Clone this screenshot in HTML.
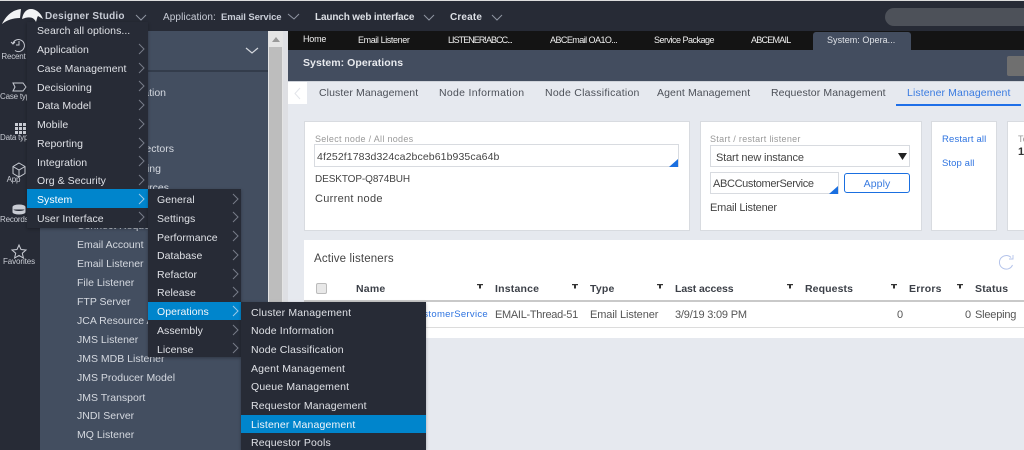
<!DOCTYPE html>
<html><head><meta charset="utf-8"><style>
html,body{margin:0;padding:0;background:#e6e9ef}
#p{position:relative;width:1024px;height:450px;overflow:hidden;background:#e6e9ef;font:11px/16px "Liberation Sans",sans-serif;letter-spacing:.3px;color:#333}
#p div{position:absolute;white-space:nowrap}
.b{font-weight:700}
.h{color:#c8ccd6;height:16px}
.tb{color:#f0f0f0;font-size:9px;letter-spacing:0;top:32px;height:16px}
.tab{color:#4c5058;top:85px;font-size:10.500px;letter-spacing:.1px}
.m{color:#dfe1e6;font-size:10.500px;letter-spacing:.05px;height:16px;margin-top:1px}
.s{font-size:10.500px;letter-spacing:.15px}
.pi{color:#d5d9e0;left:77px;font-size:10.500px;letter-spacing:0;margin-top:1px}
.n{color:#c9ccd4;font-size:8px;letter-spacing:-.2px;width:27px;overflow:hidden;text-align:center;left:0}
.c{background:#fff;border:1px solid #d8dbe0;box-sizing:border-box}
.i{background:#fff;border:1px solid #d8dbe0;box-sizing:border-box}
.th{color:#3c4048;font-weight:700;top:281px;font-size:10.500px;letter-spacing:.2px}
.td{color:#555;top:306px;letter-spacing:.1px}
.tri{width:0;height:0;border-left:9px solid transparent;border-bottom:8px solid #1a6fe0}
svg{position:absolute;overflow:visible}
</style></head><body><div id="p">
<div style="left:0;top:0;width:1024px;height:1px;background:#ddd"></div>
<div style="left:0;top:1px;width:1024px;height:30px;background:#272b36"></div>
<div style="left:885px;top:8px;width:150px;height:18px;border-radius:9px;background:#4d5159"></div>
<svg style="left:0;top:0" width="50" height="30"><path d="M2 24C6 16 12 10 21 9L20 18C13 18 7 20 2 24Z" fill="#f2f3f5"/><path d="M22 19C23 13 26 9 31 9 36 9 41 13 43 19L38 16C37 17 37 19 36 22 34 17 29 16 22 19Z" fill="#f2f3f5"/></svg>
<div class="h b" style="left:45px;top:9px;font-size:10px;letter-spacing:.2px">Designer Studio</div>
<div class="h" style="left:163px;top:10px;font-size:10px;letter-spacing:.1px">Application:</div>
<div class="h b" style="left:221px;top:10px;font-size:9.500px;letter-spacing:-.1px">Email Service</div>
<div class="h b" style="left:315px;top:10px;font-size:10px;letter-spacing:-.15px;color:#dcdfe5">Launch web interface</div>
<div class="h b" style="left:450px;top:10px;font-size:10px;letter-spacing:.15px;color:#dcdfe5">Create</div>
<svg style="left:0;top:0" width="500" height="30" fill="none" stroke="#8f95a2" stroke-width="1"><path d="M136 15l5 5 5-5M288 14l6 5 5-5M424 15l5 5 5-5M492 15l5 5 5-5"/></svg>

<div style="left:0;top:31px;width:40px;height:419px;background:#272b36"></div>
<div style="left:40px;top:31px;width:228px;height:419px;background:#434e60"></div>
<div style="left:40px;top:70px;width:228px;height:2px;background:#333c4b"></div>
<svg style="left:245px;top:47px" width="14" height="8" fill="none" stroke="#d5d8de" stroke-width="1.2"><path d="M1 1l6 5 6-5"/></svg>
<div style="left:268px;top:31px;width:15px;height:419px;background:#e4e4e4"></div>
<div style="left:269px;top:47px;width:13px;height:403px;background:#bdbdbd"></div>
<div style="left:283px;top:31px;width:5px;height:419px;background:#dedfe3"></div>
<svg style="left:272px;top:37px" width="8" height="5"><path d="M0 5L4 0L8 5Z" fill="#999"/></svg>

<div style="left:288px;top:31px;width:736px;height:19px;background:#141414"></div>
<div style="left:813px;top:32px;width:98px;height:18px;background:#434d5f;border-radius:3px 3px 0 0"></div>
<div class="tb" style="left:303px;top:31px;letter-spacing:-.2px">Home</div>
<div class="tb" style="left:358px;letter-spacing:-.4px">Email Listener</div>
<div class="tb" style="left:448px;letter-spacing:-.95px">LISTENER!ABCC...</div>
<div class="tb" style="left:550px;letter-spacing:-.55px">ABCEmail OA1O...</div>
<div class="tb" style="left:654px;letter-spacing:-.5px">Service Package</div>
<div class="tb" style="left:751px;letter-spacing:-.75px">ABCEMAIL</div>
<div class="tb" style="left:827px;color:#e0e3e8;letter-spacing:.05px">System: Opera...</div>
<div style="left:288px;top:50px;width:736px;height:31px;background:#434d5f"></div>
<div class="b" style="left:303px;top:55px;color:#e8eaee;font-size:10.500px;letter-spacing:.05px">System: Operations</div>
<div style="left:1007px;top:56px;width:20px;height:20px;background:#6f6f6f;border-radius:2px"></div>

<div style="left:288px;top:81px;width:736px;height:1px;background:#cfd3da"></div>
<div style="left:288px;top:82px;width:19px;height:22px;background:#fff"></div>
<svg style="left:294px;top:87px" width="8" height="13" fill="none" stroke="#e3e5ea"><path d="M6 1L1 6.500L6 12"/></svg>
<div class="tab" style="left:319px">Cluster Management</div>
<div class="tab" style="left:439px;letter-spacing:.3px">Node Information</div>
<div class="tab" style="left:545px;letter-spacing:.25px">Node Classification</div>
<div class="tab" style="left:657px;letter-spacing:.1px">Agent Management</div>
<div class="tab" style="left:771px">Requestor Management</div>
<div class="tab" style="left:907px;color:#3a7be0">Listener Management</div>
<div style="left:896px;top:104px;width:125px;height:2px;background:#1f6fe8"></div>

<div class="c" style="left:304px;top:121px;width:386px;height:110px"></div>
<div style="left:315px;top:131px;color:#999;font-size:9px;letter-spacing:.3px">Select node / All nodes</div>
<div class="i" style="left:314px;top:144px;width:365px;height:23px"></div>
<div style="left:317px;top:149px;color:#444;font-size:10.500px;letter-spacing:.1px">4f252f1783d324ca2bceb61b935ca64b</div>
<div class="tri" style="left:669px;top:159px"></div>
<div style="left:315px;top:172px;color:#444;font-size:10px;letter-spacing:-.1px">DESKTOP-Q874BUH</div>
<div style="left:315px;top:191px;color:#444">Current node</div>

<div class="c" style="left:700px;top:121px;width:222px;height:110px"></div>
<div style="left:710px;top:131px;color:#999;font-size:9px;letter-spacing:.3px">Start / restart listener</div>
<div class="i" style="left:710px;top:145px;width:200px;height:22px"></div>
<div style="left:716px;top:150px;color:#444;letter-spacing:-.15px">Start new instance</div>
<svg style="left:898px;top:153px" width="9" height="7"><path d="M0 0H9L4.500 7Z" fill="#222"/></svg>
<div class="i" style="left:710px;top:172px;width:129px;height:22px"></div>
<div style="left:713px;top:176px;color:#444;letter-spacing:-.35px">ABCCustomerService</div>
<div class="tri" style="left:829px;top:186px"></div>
<div style="left:844px;top:173px;width:66px;height:20px;box-sizing:border-box;border:1px solid #1a6fe0;border-radius:3px;background:#fff;color:#3a7be0;text-align:center;line-height:20px;font-size:10.500px;letter-spacing:.1px">Apply</div>
<div style="left:710px;top:200px;color:#444;letter-spacing:-.2px">Email Listener</div>

<div class="c" style="left:931px;top:121px;width:66px;height:110px"></div>
<div style="left:942px;top:132px;color:#2f74e0;font-size:9.500px;letter-spacing:.15px">Restart all</div>
<div style="left:942px;top:156px;color:#2f74e0;font-size:9.500px;letter-spacing:.1px">Stop all</div>
<div class="c" style="left:1007px;top:121px;width:40px;height:110px"></div>
<div style="left:1018px;top:131px;color:#999;font-size:9px">Total</div>
<div class="b" style="left:1018px;top:144px;color:#333">1</div>

<div style="left:304px;top:240px;width:720px;height:98px;background:#fff"></div>
<div style="left:314px;top:251px;color:#444;font-size:11.500px;letter-spacing:.15px">Active listeners</div>
<svg style="left:998px;top:254px" width="17" height="17" fill="none" stroke="#b4c3ea" stroke-width="1"><path d="M14.500 11A6.800 6.800 0 1 1 13 3.500"/><path d="M15 1v4h-4" stroke-width=".9"/></svg>
<div style="left:316px;top:283px;width:9px;height:9px;border:1px solid #bbb;border-radius:2px;background:#e8e8e8"></div>
<div class="th" style="left:356px">Name</div>
<div class="th" style="left:495px">Instance</div>
<div class="th" style="left:590px">Type</div>
<div class="th" style="left:675px;letter-spacing:-.1px">Last access</div>
<div class="th" style="left:805px;letter-spacing:.1px">Requests</div>
<div class="th" style="left:909px">Errors</div>
<div class="th" style="left:975px">Status</div>
<svg style="left:0;top:284px" width="1024" height="7" fill="#333"><path d="M477 0h6v1.200h-2v3.300h-2v-3.300h-2zM572 0h6v1.200h-2v3.300h-2v-3.300h-2zM657 0h6v1.200h-2v3.300h-2v-3.300h-2zM787 0h6v1.200h-2v3.300h-2v-3.300h-2zM891 0h6v1.200h-2v3.300h-2v-3.300h-2zM957 0h6v1.200h-2v3.300h-2v-3.300h-2z"/></svg>
<div style="left:304px;top:300px;width:720px;height:2px;background:#c9c9c9"></div>
<div style="left:304px;top:327px;width:720px;height:1px;background:#dcdcdc"></div>
<div class="td" style="left:370px;top:307px;width:118px;text-align:right;color:#2f74e0;font-size:9.500px;letter-spacing:.3px">ABCCustomerService</div>
<div class="td" style="left:495px;top:307px;letter-spacing:-.3px">EMAIL-Thread-51</div>
<div class="td" style="left:590px;top:307px;letter-spacing:-.1px">Email Listener</div>
<div class="td" style="left:675px;top:307px;letter-spacing:-.2px">3/9/19 3:09 PM</div>
<div class="td" style="left:897px;top:307px">0</div>
<div class="td" style="left:965px;top:307px">0</div>
<div class="td" style="left:975px;top:307px;letter-spacing:-.2px">Sleeping</div>

<div class="pi" style="left:100px;top:84px;width:66px;text-align:right;overflow:hidden">Application</div>
<div class="pi" style="left:100px;top:140px;width:74px;text-align:right;overflow:hidden">Connectors</div>
<div class="pi" style="left:100px;top:160px;width:61px;text-align:right;overflow:hidden">Processing</div>
<div class="pi" style="top:179px;left:100px;width:69px;text-align:right;overflow:hidden">Resources</div>
<div class="pi" style="top:217px">Connect Request</div>
<div class="pi" style="top:236px">Email Account</div>
<div class="pi" style="top:255px">Email Listener</div>
<div class="pi" style="top:274px">File Listener</div>
<div class="pi" style="top:293px">FTP Server</div>
<div class="pi" style="top:312px">JCA Resource Adapter</div>
<div class="pi" style="top:331px">JMS Listener</div>
<div class="pi" style="top:350px">JMS MDB Listener</div>
<div class="pi" style="top:369px">JMS Producer Model</div>
<div class="pi" style="top:389px">JMS Transport</div>
<div class="pi" style="top:407px">JNDI Server</div>
<div class="pi" style="top:426px">MQ Listener</div>

<div class="n" style="top:49px">Recent</div>
<div class="n" style="top:89px">Case types</div>
<div class="n" style="top:130px">Data types</div>
<div class="n" style="top:172px">App</div>
<div class="n" style="top:212px">Records</div>
<div style="left:0;top:254px;width:38px;text-align:center;color:#c9ccd4;font-size:8px;letter-spacing:-.1px">Favorites</div>
<svg style="left:0;top:30px" width="40" height="240" fill="none" stroke="#c9ccd4" stroke-width="1"><path d="M13 13A6 6 0 1 1 15 20.500M11 12l2 2 2-2M19 11v4l-3 0"/><path d="M13 53h10l3 4-3 4H13l2-4z"/><path fill="#c9ccd4" stroke="none" d="M15 93h3v3h-3zM19 93h3v3h-3zM23 93h3v3h-3zM15 97h3v3h-3zM19 97h3v3h-3zM23 97h3v3h-3zM15 101h3v3h-3zM19 101h3v3h-3zM23 101h3v3h-3z"/><path d="M19 133l6 3.500v7l-6 3.500-6-3.500v-7zM13 136.500l6 3.500 6-3.500M19 140v7"/><path d="M13 177a6 2 0 0 1 12 0v5a6 2 0 0 1-12 0zM13 179.500a6 2 0 0 0 12 0" fill="#c9ccd4"/><path d="M19 216l2 4.500 5 .5-3.700 3.200 1.100 4.800-4.400-2.600-4.400 2.600 1.100-4.800L12 221l5-.5z" transform="translate(0 -1)"/></svg>

<div style="left:27px;top:22px;width:121px;height:206px;background:#272b36;box-shadow:0 1px 3px rgba(0,0,0,.3)"></div>
<div style="left:27px;top:189px;width:121px;height:19px;background:#0085cc"></div>
<div class="m" style="left:37px;top:22px">Search all options...</div>
<div class="m" style="left:37px;top:41px">Application</div>
<div class="m" style="left:37px;top:60px">Case Management</div>
<div class="m" style="left:37px;top:79px">Decisioning</div>
<div class="m" style="left:37px;top:97px">Data Model</div>
<div class="m" style="left:37px;top:116px">Mobile</div>
<div class="m" style="left:37px;top:135px">Reporting</div>
<div class="m" style="left:37px;top:154px">Integration</div>
<div class="m" style="left:37px;top:172px">Org &amp; Security</div>
<div class="m" style="left:37px;top:191px;color:#fff">System</div>
<div class="m" style="left:37px;top:210px">User Interface</div>
<svg style="left:0;top:0" width="260" height="360" fill="none" stroke="#777c89" stroke-width="1"><path d="M139 44l5 5-5 5M139 63l5 5-5 5M139 81l5 5-5 5M139 100l5 5-5 5M139 119l5 5-5 5M139 138l5 5-5 5M139 156l5 5-5 5M139 175l5 5-5 5M139 212l5 5-5 5"/><path stroke="#9cc8e6" d="M139 194l5 5-5 5"/></svg>

<div style="left:148px;top:189px;width:93px;height:168px;background:#272b36;box-shadow:0 1px 3px rgba(0,0,0,.3)"></div>
<div style="left:148px;top:302px;width:93px;height:18px;background:#0085cc"></div>
<div class="m" style="left:157px;top:191px">General</div>
<div class="m" style="left:157px;top:210px">Settings</div>
<div class="m" style="left:157px;top:229px">Performance</div>
<div class="m" style="left:157px;top:247px">Database</div>
<div class="m" style="left:157px;top:266px">Refactor</div>
<div class="m" style="left:157px;top:284px">Release</div>
<div class="m" style="left:157px;top:303px;color:#f2f6fa">Operations</div>
<div class="m" style="left:157px;top:322px">Assembly</div>
<div class="m" style="left:157px;top:341px">License</div>
<svg style="left:0;top:0" width="260" height="360" fill="none" stroke="#777c89" stroke-width="1"><path d="M233 194l5 5-5 5M233 212l5 5-5 5M233 231l5 5-5 5M233 250l5 5-5 5M233 269l5 5-5 5M233 287l5 5-5 5M233 325l5 5-5 5M233 343l5 5-5 5"/><path stroke="#9cc8e6" d="M233 306l5 5-5 5"/></svg>

<div style="left:241px;top:302px;width:185px;height:148px;background:#272b36;box-shadow:0 1px 3px rgba(0,0,0,.3)"></div>
<div style="left:241px;top:415px;width:185px;height:18px;background:#0085cc"></div>
<div class="m s" style="left:251px;top:304px">Cluster Management</div>
<div class="m s" style="left:251px;top:322px">Node Information</div>
<div class="m s" style="left:251px;top:341px">Node Classification</div>
<div class="m s" style="left:251px;top:360px">Agent Management</div>
<div class="m s" style="left:251px;top:378px">Queue Management</div>
<div class="m s" style="left:251px;top:397px">Requestor Management</div>
<div class="m s" style="left:251px;top:416px;color:#f2f6fa">Listener Management</div>
<div class="m s" style="left:251px;top:434px">Requestor Pools</div>
</div></body></html>
